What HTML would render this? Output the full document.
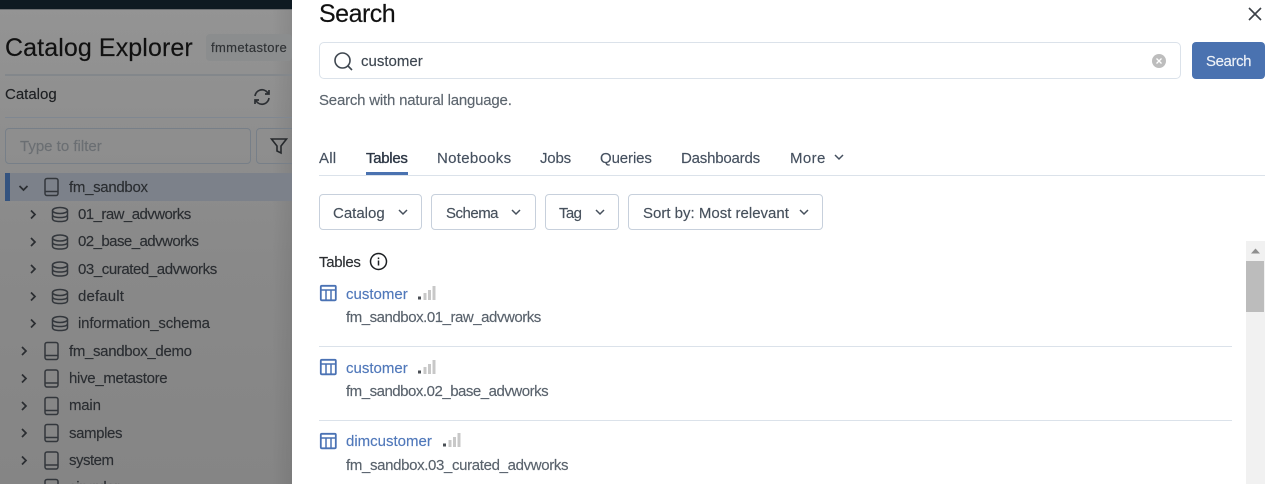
<!DOCTYPE html>
<html><head><meta charset="utf-8"><style>
html,body{margin:0;padding:0;width:1280px;height:484px;overflow:hidden;background:#fff}
body{position:relative;font-family:"Liberation Sans",sans-serif}
.t{position:absolute;white-space:nowrap;line-height:20px;-webkit-text-stroke:.15px currentColor}
.a{position:absolute;box-sizing:border-box}
svg{position:absolute;overflow:visible;fill:none}
.l{font-size:15px;color:#2a2d31}
.tab{font-size:15px;color:#45505f;top:149px}
.b{position:absolute;box-sizing:border-box;top:194px;height:36px;border:1px solid #c7d0dc;border-radius:4px;background:#fff}
.f{font-size:15px;color:#46505c;top:204px}
.lnk{font-size:15px;color:#5078ba}
.p{font-size:15px;color:#59626c;letter-spacing:-.46px}
</style></head><body>
<div class="a" style="left:0;top:0;width:292px;height:484px;background:linear-gradient(180deg,#949494 0,#898989 260px,#858585 484px);overflow:hidden">
<div class="a" style="left:272px;top:0;width:20px;height:484px;background:linear-gradient(90deg,rgba(0,0,0,0),rgba(0,0,0,.07))"></div>
<div class="a" style="left:0;top:0;width:292px;height:9px;background:#0e1a22"></div>
<div class="a" style="left:0;top:9px;width:292px;height:1px;background:#6c6f72"></div>
<div class="t" style="left:5px;top:35px;font-size:25px;line-height:26px;color:#111;letter-spacing:.1px">Catalog Explorer</div>
<div class="a" style="left:206px;top:34px;width:86px;height:27px;background:#8b8d8e;border-radius:4px"></div>
<div class="t" style="left:211px;top:38px;font-size:13px;color:#2f3235;letter-spacing:.35px">fmmetastore</div>
<div class="a" style="left:5px;top:74px;width:287px;height:2px;background:#83878b"></div>
<div class="t" style="left:5px;top:85px;font-size:15px;color:#1d1f22">Catalog</div>
<svg style="left:252px;top:87px" width="20" height="20" viewBox="0 0 20 20" stroke="#2c2f33" stroke-width="1.7"><path d="M3 9a7 7 0 0 1 12.5-3.5L17 7M17 3v4h-4M17 11a7 7 0 0 1-12.5 3.500L3 13M3 17v-4h4"/></svg>
<div class="a" style="left:5px;top:117px;width:287px;height:1px;background:#7f8791"></div>
<div class="a" style="left:5px;top:128px;width:246px;height:36px;border:1px solid #777f88;border-radius:4px"></div>
<div class="t" style="left:20px;top:137px;font-size:15px;color:#6b6f73">Type to filter</div>
<div class="a" style="left:256px;top:128px;width:50px;height:36px;border:1px solid #777f88;border-radius:4px"></div>
<svg style="left:270px;top:137px" width="18" height="18" viewBox="0 0 18 18" stroke="#26292c" stroke-width="1.6"><path d="M1.500 2h15L11 9v7l-4-2V9z"/></svg>
<div class="a" style="left:5px;top:173px;width:287px;height:28px;background:#7c818a"></div>
<div class="a" style="left:5px;top:173px;width:5px;height:28px;background:#34537f"></div>
<svg width="292" height="484" style="left:0;top:0" stroke="#2a2d31" stroke-width="1.700">
<path d="M19.500 186l4 4 4-4"/>
<path d="M31 210.500l4 4-4 4M31 238l4 4-4 4M31 265l4 4-4 4M31 292.500l4 4-4 4M31 319.500l4 4-4 4M22 347l4 4-4 4M22 374.500l4 4-4 4M22 402l4 4-4 4M22 429l4 4-4 4M22 456.500l4 4-4 4"/>
<g stroke="#33373c" stroke-width="1.500">
<g transform="translate(0,0)"><rect x="45" y="178.500" width="13" height="17" rx="2"/><path d="M45 191.500h13"/></g>
<g transform="translate(0,164)"><rect x="45" y="178.500" width="13" height="17" rx="2"/><path d="M45 191.500h13"/></g>
<g transform="translate(0,191.500)"><rect x="45" y="178.500" width="13" height="17" rx="2"/><path d="M45 191.500h13"/></g>
<g transform="translate(0,219)"><rect x="45" y="178.500" width="13" height="17" rx="2"/><path d="M45 191.500h13"/></g>
<g transform="translate(0,246)"><rect x="45" y="178.500" width="13" height="17" rx="2"/><path d="M45 191.500h13"/></g>
<g transform="translate(0,273.500)"><rect x="45" y="178.500" width="13" height="17" rx="2"/><path d="M45 191.500h13"/></g>
<g transform="translate(0,301)"><rect x="45" y="178.500" width="13" height="17" rx="2"/></g>
<g transform="translate(0,0)"><ellipse cx="60" cy="210.500" rx="7.500" ry="3"/><path d="M52.500 210.500v8c0 2 3 3 7.500 3s7.500-1 7.500-3v-8M52.500 214.500c0 2 3 3 7.500 3s7.500-1 7.500-3"/></g>
<g transform="translate(0,27.500)"><ellipse cx="60" cy="210.500" rx="7.500" ry="3"/><path d="M52.500 210.500v8c0 2 3 3 7.500 3s7.500-1 7.500-3v-8M52.500 214.500c0 2 3 3 7.500 3s7.500-1 7.500-3"/></g>
<g transform="translate(0,54.500)"><ellipse cx="60" cy="210.500" rx="7.500" ry="3"/><path d="M52.500 210.500v8c0 2 3 3 7.500 3s7.500-1 7.500-3v-8M52.500 214.500c0 2 3 3 7.500 3s7.500-1 7.500-3"/></g>
<g transform="translate(0,82)"><ellipse cx="60" cy="210.500" rx="7.500" ry="3"/><path d="M52.500 210.500v8c0 2 3 3 7.500 3s7.500-1 7.500-3v-8M52.500 214.500c0 2 3 3 7.500 3s7.500-1 7.500-3"/></g>
<g transform="translate(0,109)"><ellipse cx="60" cy="210.500" rx="7.500" ry="3"/><path d="M52.500 210.500v8c0 2 3 3 7.500 3s7.500-1 7.500-3v-8M52.500 214.500c0 2 3 3 7.500 3s7.500-1 7.500-3"/></g>
</g>
</svg>
<div class="t l" style="left:69px;top:178px;letter-spacing:-.3px">fm_sandbox</div>
<div class="t l" style="left:78px;top:205px;letter-spacing:-.55px">01_raw_advworks</div>
<div class="t l" style="left:78px;top:232px;letter-spacing:-.55px">02_base_advworks</div>
<div class="t l" style="left:78px;top:260px;letter-spacing:-.42px">03_curated_advworks</div>
<div class="t l" style="left:78px;top:287px;letter-spacing:.15px">default</div>
<div class="t l" style="left:78px;top:314px;letter-spacing:-.18px">information_schema</div>
<div class="t l" style="left:69px;top:342px;letter-spacing:-.33px">fm_sandbox_demo</div>
<div class="t l" style="left:69px;top:369px;letter-spacing:-.3px">hive_metastore</div>
<div class="t l" style="left:69px;top:396px;letter-spacing:-.2px">main</div>
<div class="t l" style="left:69px;top:424px;letter-spacing:-.4px">samples</div>
<div class="t l" style="left:69px;top:451px;letter-spacing:-.5px">system</div>
<div class="t l" style="left:69px;top:478px;letter-spacing:-.3px">singular</div>
</div>

<div class="t" style="left:319px;top:1px;font-size:25px;line-height:26px;color:#111;letter-spacing:-.5px">Search</div>
<svg style="left:1247px;top:6px" width="16" height="16" viewBox="0 0 16 16" stroke="#3c4148" stroke-width="1.6"><path d="M2 2l12 12M14 2L2 14"/></svg>
<div class="a" style="left:319px;top:42px;width:862px;height:37px;border:1px solid #dbe2ea;border-radius:5px"></div>
<svg style="left:333px;top:51px" width="20" height="20" viewBox="0 0 20 20" stroke="#3f4750" stroke-width="1.6"><circle cx="9.500" cy="9.500" r="7.500"/><path d="M15 15l4 4"/></svg>
<div class="t" style="left:361px;top:52px;font-size:15px;color:#3d4650">customer</div>
<div class="a" style="left:1152px;top:54px;width:14px;height:14px;border-radius:50%;background:#bdbdbd"></div>
<svg style="left:1156px;top:58px" width="6" height="6" viewBox="0 0 6 6" stroke="#fff" stroke-width="1.300"><path d="M.5.5l5 5M5.500.5l-5 5"/></svg>
<div class="a" style="left:1192px;top:42px;width:73px;height:37px;background:#4a72b0;border-radius:4px"></div>
<div class="t" style="left:1206px;top:52px;font-size:15px;color:#eef2f8;letter-spacing:-.4px">Search</div>
<div class="t" style="left:319px;top:91px;font-size:15px;color:#5c656e;letter-spacing:-.2px">Search with natural language.</div>

<div class="t tab" style="left:319px;letter-spacing:.2px">All</div>
<div class="t tab" style="left:366px;color:#2c3644;-webkit-text-stroke:.35px #2c3644;letter-spacing:-.3px">Tables</div>
<div class="t tab" style="left:437px;letter-spacing:.3px">Notebooks</div>
<div class="t tab" style="left:540px;letter-spacing:-.2px">Jobs</div>
<div class="t tab" style="left:600px;letter-spacing:-.1px">Queries</div>
<div class="t tab" style="left:681px;letter-spacing:-.2px">Dashboards</div>
<div class="t tab" style="left:790px;letter-spacing:.4px">More</div>
<svg style="left:834px;top:154px" width="10" height="7" viewBox="0 0 10 7" stroke="#45505f" stroke-width="1.500"><path d="M1 1l4 4 4-4"/></svg>
<div class="a" style="left:319px;top:175px;width:946px;height:1px;background:#dbe2ea"></div>
<div class="a" style="left:366px;top:172px;width:42px;height:3px;background:#4a72b0"></div>

<div class="b" style="left:319px;width:103px"></div><div class="t f" style="left:333px">Catalog</div>
<svg style="left:398px;top:209px" width="10" height="7" viewBox="0 0 10 7" stroke="#46505c" stroke-width="1.500"><path d="M1 1l4 4 4-4"/></svg>
<div class="b" style="left:431px;width:105px"></div><div class="t f" style="left:446px;letter-spacing:-.5px">Schema</div>
<svg style="left:511px;top:209px" width="10" height="7" viewBox="0 0 10 7" stroke="#46505c" stroke-width="1.500"><path d="M1 1l4 4 4-4"/></svg>
<div class="b" style="left:545px;width:74px"></div><div class="t f" style="left:559px;letter-spacing:-.6px">Tag</div>
<svg style="left:595px;top:209px" width="10" height="7" viewBox="0 0 10 7" stroke="#46505c" stroke-width="1.500"><path d="M1 1l4 4 4-4"/></svg>
<div class="b" style="left:628px;width:195px"></div><div class="t f" style="left:643px">Sort by: Most relevant</div>
<svg style="left:799px;top:209px" width="10" height="7" viewBox="0 0 10 7" stroke="#46505c" stroke-width="1.500"><path d="M1 1l4 4 4-4"/></svg>

<div class="t" style="left:319px;top:253px;font-size:15px;color:#2a2d31;letter-spacing:-.3px">Tables</div>
<svg style="left:369px;top:252px" width="19" height="19" viewBox="0 0 19 19" stroke="#1c1f22" stroke-width="1.500"><circle cx="9.500" cy="9.500" r="8"/><path d="M9.500 8.500v5M9.500 5.500v1.600"/></svg>

<svg style="left:320px;top:285px" width="18" height="16" viewBox="0 0 18 16" stroke="#4a72b4" stroke-width="1.800"><rect x=".8" y=".8" width="15" height="14.500" rx="1"/><path d="M.8 5h15M6 5v10M11 5v10" stroke-width="1.500"/></svg>
<svg style="left:320px;top:359px" width="18" height="16" viewBox="0 0 18 16" stroke="#4a72b4" stroke-width="1.800"><rect x=".8" y=".8" width="15" height="14.500" rx="1"/><path d="M.8 5h15M6 5v10M11 5v10" stroke-width="1.500"/></svg>
<svg style="left:320px;top:433px" width="18" height="16" viewBox="0 0 18 16" stroke="#4a72b4" stroke-width="1.800"><rect x=".8" y=".8" width="15" height="14.500" rx="1"/><path d="M.8 5h15M6 5v10M11 5v10" stroke-width="1.500"/></svg>
<div class="t lnk" style="left:346px;top:285px">customer</div>
<div class="t p" style="left:346px;top:308px">fm_sandbox.01_raw_advworks</div>
<div class="a" style="left:319px;top:346px;width:913px;height:1px;background:#dbe2ea"></div>
<div class="t lnk" style="left:346px;top:359px">customer</div>
<div class="t p" style="left:346px;top:382px;letter-spacing:-.48px">fm_sandbox.02_base_advworks</div>
<div class="a" style="left:319px;top:420px;width:913px;height:1px;background:#dbe2ea"></div>
<div class="t lnk" style="left:346px;top:432px">dimcustomer</div>
<div class="t p" style="left:346px;top:456px;letter-spacing:-.35px">fm_sandbox.03_curated_advworks</div>
<svg style="left:418px;top:286px" width="19" height="14"><rect x="0" y="10.500" width="3" height="3" fill="#4a4f55"/><rect x="5.500" y="7" width="3" height="7" fill="#c8c8c8"/><rect x="10" y="4" width="3" height="10" fill="#c8c8c8"/><rect x="14.500" y="0" width="3" height="14" fill="#c8c8c8"/></svg>
<svg style="left:418px;top:360px" width="19" height="14"><rect x="0" y="10.500" width="3" height="3" fill="#4a4f55"/><rect x="5.500" y="7" width="3" height="7" fill="#c8c8c8"/><rect x="10" y="4" width="3" height="10" fill="#c8c8c8"/><rect x="14.500" y="0" width="3" height="14" fill="#c8c8c8"/></svg>
<svg style="left:443px;top:433px" width="19" height="14"><rect x="0" y="10.500" width="3" height="3" fill="#4a4f55"/><rect x="5.500" y="7" width="3" height="7" fill="#c8c8c8"/><rect x="10" y="4" width="3" height="10" fill="#c8c8c8"/><rect x="14.500" y="0" width="3" height="14" fill="#c8c8c8"/></svg>

<div class="a" style="left:1246px;top:241px;width:19px;height:243px;background:#f1f1f1"></div>
<div class="a" style="left:1246px;top:261px;width:18px;height:51px;background:#bcbcbc"></div>
<svg style="left:1251px;top:248px" width="9" height="6"><path d="M0 5.500L4.500 .5 9 5.500z" fill="#8f8f8f"/></svg>
</body></html>
